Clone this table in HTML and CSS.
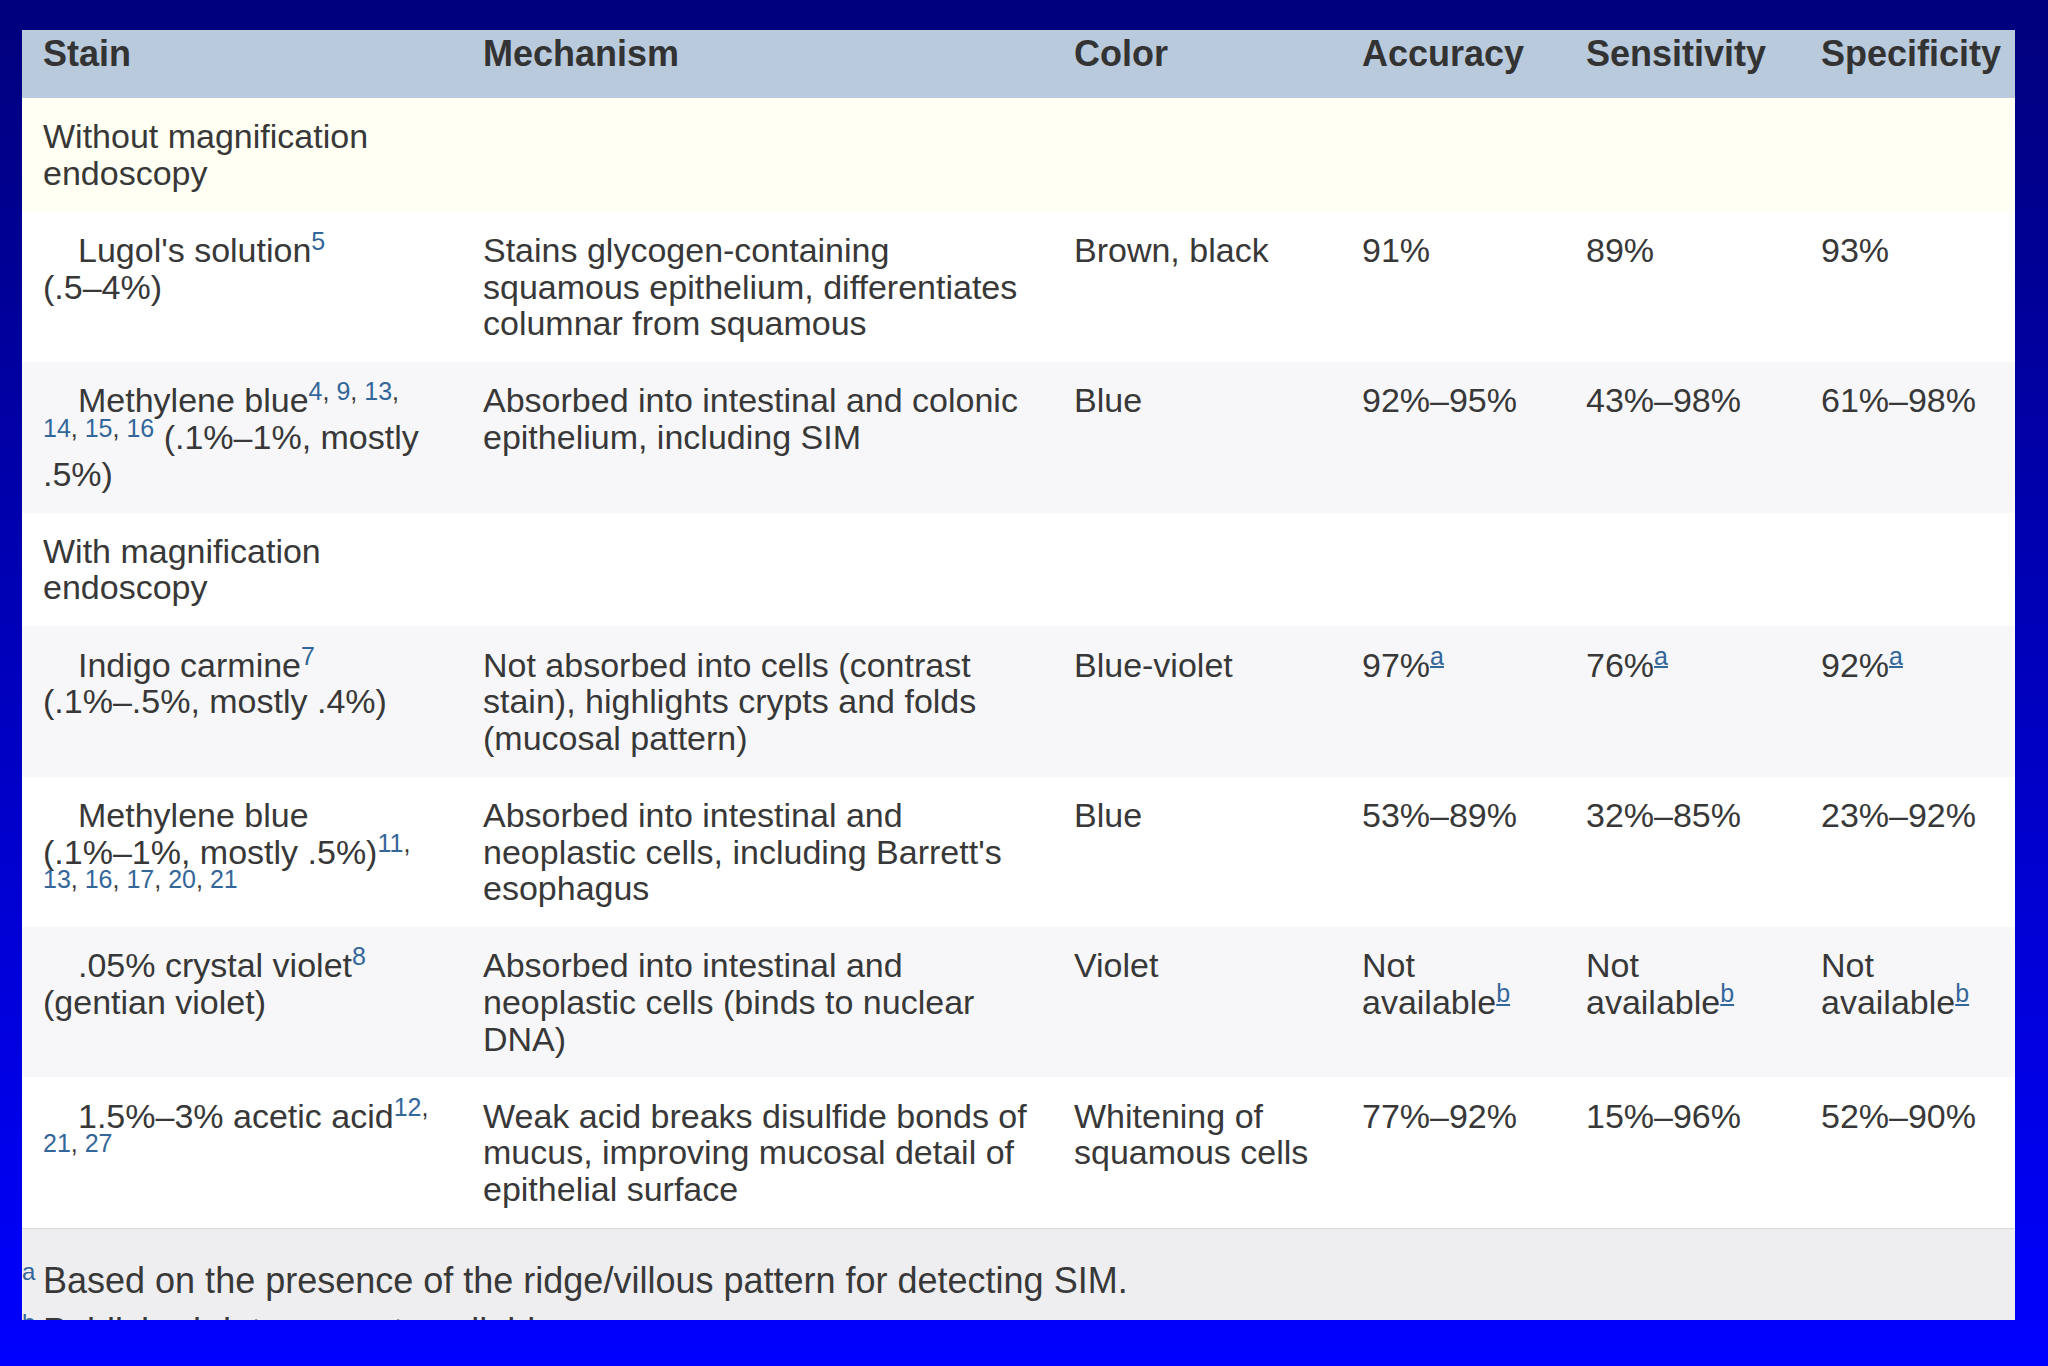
FILE: index.html
```html
<!DOCTYPE html>
<html lang="en">
<head>
<meta charset="utf-8">
<title>Chromoendoscopy stains</title>
<link rel="stylesheet" href="styles.css">
</head>
<body>
<div class="frame">
  <table class="stains">
    <colgroup>
      <col class="c-stain">
      <col class="c-mech">
      <col class="c-color">
      <col class="c-acc">
      <col class="c-sens">
      <col class="c-spec">
    </colgroup>
    <thead>
      <tr>
        <th>Stain</th>
        <th>Mechanism</th>
        <th>Color</th>
        <th>Accuracy</th>
        <th>Sensitivity</th>
        <th>Specificity</th>
      </tr>
    </thead>
    <tbody>
      <tr class="section">
        <td>Without magnification<br>endoscopy</td>
        <td></td><td></td><td></td><td></td><td></td>
      </tr>
      <tr>
        <td class="stain">Lugol's solution<sup><a class="ref">5</a></sup><br>(.5–4%)</td>
        <td>Stains glycogen-containing<br>squamous epithelium, differentiates<br>columnar from squamous</td>
        <td>Brown, black</td>
        <td>91%</td>
        <td>89%</td>
        <td>93%</td>
      </tr>
      <tr class="alt">
        <td class="stain">Methylene blue<sup><a class="ref">4</a>, <a class="ref">9</a>, <a class="ref">13</a>,</sup><br><sup><a class="ref">14</a>, <a class="ref">15</a>, <a class="ref">16</a></sup> (.1%–1%, mostly<br>.5%)</td>
        <td>Absorbed into intestinal and colonic<br>epithelium, including SIM</td>
        <td>Blue</td>
        <td>92%–95%</td>
        <td>43%–98%</td>
        <td>61%–98%</td>
      </tr>
      <tr>
        <td>With magnification<br>endoscopy</td>
        <td></td><td></td><td></td><td></td><td></td>
      </tr>
      <tr class="alt">
        <td class="stain">Indigo carmine<sup><a class="ref">7</a></sup><br>(.1%–.5%, mostly .4%)</td>
        <td>Not absorbed into cells (contrast<br>stain), highlights crypts and folds<br>(mucosal pattern)</td>
        <td>Blue-violet</td>
        <td>97%<sup><a class="fn">a</a></sup></td>
        <td>76%<sup><a class="fn">a</a></sup></td>
        <td>92%<sup><a class="fn">a</a></sup></td>
      </tr>
      <tr>
        <td class="stain">Methylene blue<br>(.1%–1%, mostly .5%)<sup><a class="ref">11</a>,<br><span class="refline"><a class="ref">13</a>, <a class="ref">16</a>, <a class="ref">17</a>, <a class="ref">20</a>, <a class="ref">21</a></span></sup></td>
        <td>Absorbed into intestinal and<br>neoplastic cells, including Barrett's<br>esophagus</td>
        <td>Blue</td>
        <td>53%–89%</td>
        <td>32%–85%</td>
        <td>23%–92%</td>
      </tr>
      <tr class="alt">
        <td class="stain">.05% crystal violet<sup><a class="ref">8</a></sup><br>(gentian violet)</td>
        <td>Absorbed into intestinal and<br>neoplastic cells (binds to nuclear<br>DNA)</td>
        <td>Violet</td>
        <td>Not<br>available<sup><a class="fn">b</a></sup></td>
        <td>Not<br>available<sup><a class="fn">b</a></sup></td>
        <td>Not<br>available<sup><a class="fn">b</a></sup></td>
      </tr>
      <tr>
        <td class="stain">1.5%–3% acetic acid<sup><a class="ref">12</a>,<br><a class="ref">21</a>, <a class="ref">27</a></sup></td>
        <td>Weak acid breaks disulfide bonds of<br>mucus, improving mucosal detail of<br>epithelial surface</td>
        <td>Whitening of<br>squamous cells</td>
        <td>77%–92%</td>
        <td>15%–96%</td>
        <td>52%–90%</td>
      </tr>
    </tbody>
  </table>
  <div class="notes">
    <p class="note"><sup class="mark">a</sup>Based on the presence of the ridge/villous pattern for detecting SIM.</p>
    <p class="note"><sup class="mark">b</sup>Published data are not available.</p>
  </div>
</div>
</body>
</html>
```
FILE: styles.css
```css
html, body {
  margin: 0;
}

body {
  width: 2048px;
  height: 1366px;
  box-sizing: border-box;
  padding: 30px 0 0 22px;
  overflow: hidden;
  background: linear-gradient(to bottom, #00007c 0%, #0000ff 100%);
  font-family: "Liberation Sans", Arial, sans-serif;
}

.frame {
  width: 1993px;
  height: 1290px;
  overflow: hidden;
  background: #ffffff;
}

.stains {
  width: 1993px;
  table-layout: fixed;
  border-collapse: collapse;
  color: #383838;
  font-size: 34px;
  line-height: 36.6px;
}

.c-stain { width: 440px; }
.c-mech  { width: 591px; }
.c-color { width: 288px; }
.c-acc   { width: 224px; }
.c-sens  { width: 235px; }
.c-spec  { width: 215px; }

.stains th {
  background: #b9cadd;
  color: #333333;
  font-weight: bold;
  font-size: 36px;
  line-height: 44px;
  text-align: left;
  vertical-align: top;
  padding: 2px 6px 22px 21px;
  white-space: nowrap;
}

.stains td {
  vertical-align: top;
  padding: 20.3px 12px 20.3px 21px;
  background: #ffffff;
}

.stains tr.alt td {
  background: #f7f7f9;
}

.stains tr.section td {
  background: #fffff3;
}

.stains td.stain {
  text-indent: 35px;
}

.stains sup {
  font-size: 25px;
  line-height: 0;
  vertical-align: super;
}

.ref {
  color: #336699;
  text-decoration: none;
}

.fn {
  color: #336699;
  text-decoration: underline;
}

.notes {
  background: #eeeef0;
  border-top: 1px solid #d9d9dc;
  padding: 33px 21px 0;
  height: 200px;
}

.note {
  margin: 0 0 13px;
  color: #383838;
  font-size: 36px;
  line-height: 38px;
}

.mark {
  display: inline-block;
  width: 21px;
  margin-left: -21px;
  color: #336699;
  font-size: 24px;
  line-height: 0;
  vertical-align: super;
}
```
